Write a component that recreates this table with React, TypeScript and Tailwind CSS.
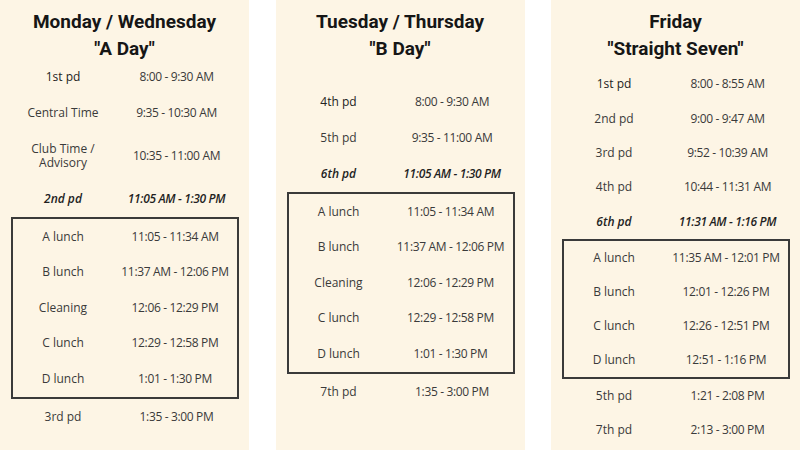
type Row = { label: string; time: string; lines?: number; strong?: boolean; italic?: boolean };

type Day = {
  title: string;
  sub: string;
  start: number;
  rowH: number;
  before: Row[];
  lunch: Row[];
  after: Row[];
};

const DAYS: Day[] = [
  {
    title: 'Monday / Wednesday',
    sub: '"A Day"',
    start: 59,
    rowH: 36,
    before: [
      { label: '1st pd', time: '8:00 - 9:30 AM', strong: true },
      { label: 'Central Time', time: '9:35 - 10:30 AM' },
      { label: 'Club Time / Advisory', time: '10:35 - 11:00 AM', lines: 2 },
      { label: '2nd pd', time: '11:05 AM - 1:30 PM', italic: true },
    ],
    lunch: [
      { label: 'A lunch', time: '11:05 - 11:34 AM' },
      { label: 'B lunch', time: '11:37 AM - 12:06 PM' },
      { label: 'Cleaning', time: '12:06 - 12:29 PM' },
      { label: 'C lunch', time: '12:29 - 12:58 PM' },
      { label: 'D lunch', time: '1:01 - 1:30 PM' },
    ],
    after: [{ label: '3rd pd', time: '1:35 - 3:00 PM' }],
  },
  {
    title: 'Tuesday / Thursday',
    sub: '"B Day"',
    start: 84,
    rowH: 36,
    before: [
      { label: '4th pd', time: '8:00 - 9:30 AM', strong: true },
      { label: '5th pd', time: '9:35 - 11:00 AM' },
      { label: '6th pd', time: '11:05 AM - 1:30 PM', italic: true },
    ],
    lunch: [
      { label: 'A lunch', time: '11:05 - 11:34 AM' },
      { label: 'B lunch', time: '11:37 AM - 12:06 PM' },
      { label: 'Cleaning', time: '12:06 - 12:29 PM' },
      { label: 'C lunch', time: '12:29 - 12:58 PM' },
      { label: 'D lunch', time: '1:01 - 1:30 PM' },
    ],
    after: [{ label: '7th pd', time: '1:35 - 3:00 PM' }],
  },
  {
    title: 'Friday',
    sub: '"Straight Seven"',
    start: 67,
    rowH: 34.4,
    before: [
      { label: '1st pd', time: '8:00 - 8:55 AM', strong: true },
      { label: '2nd pd', time: '9:00 - 9:47 AM' },
      { label: '3rd pd', time: '9:52 - 10:39 AM' },
      { label: '4th pd', time: '10:44 - 11:31 AM' },
      { label: '6th pd', time: '11:31 AM - 1:16 PM', italic: true },
    ],
    lunch: [
      { label: 'A lunch', time: '11:35 AM - 12:01 PM' },
      { label: 'B lunch', time: '12:01 - 12:26 PM' },
      { label: 'C lunch', time: '12:26 - 12:51 PM' },
      { label: 'D lunch', time: '12:51 - 1:16 PM' },
    ],
    after: [
      { label: '5th pd', time: '1:21 - 2:08 PM' },
      { label: '7th pd', time: '2:13 - 3:00 PM' },
    ],
  },
];

const ScheduleRow = ({ row, h, boxed }: { row: Row; h: number; boxed?: boolean }) => (
  <div
    className={
      (boxed ? 'grid-cols-[100px_1fr]' : 'grid-cols-[104px_1fr]') +
      ' grid items-center text-center leading-[14px] ' +
      (row.italic ? 'italic font-semibold text-[#1f1f1f]' : 'text-[#3a3a3a]')
    }
    style={{ height: h + (row.lines ? (row.lines - 1) * 14 : 0) }}
  >
    <span className={row.strong ? 'font-medium text-[#222] px-3' : 'px-3'}>{row.label}</span>
    <span className="whitespace-nowrap tracking-[-0.35px]">{row.time}</span>
  </div>
);

const DayPanel = ({ day }: { day: Day }) => (
  <section className="flex h-[450px] w-[249px] shrink-0 flex-col bg-[#fdf5e5] font-['Open_Sans',sans-serif] text-[12px]">
    <div className="pt-[8px] text-center font-['Roboto',sans-serif] text-[19px] font-bold leading-[27px] text-[#161616]">
      <div>{day.title}</div>
      <div>{day.sub}</div>
    </div>
    <div className="px-[11px]" style={{ marginTop: day.start - 62 }}>
      {day.before.map((r) => (
        <ScheduleRow key={r.label} row={r} h={day.rowH} />
      ))}
    </div>
    <div className="ml-[11px] mr-[10px] border-2 border-[#3a3a3a]">
      {day.lunch.map((r) => (
        <ScheduleRow key={r.label} row={r} h={day.rowH - 0.5} boxed />
      ))}
    </div>
    <div className="px-[11px]">
      {day.after.map((r) => (
        <ScheduleRow key={r.label} row={r} h={day.rowH} />
      ))}
    </div>
  </section>
);

export default function App() {
  return (
    <div className="flex h-[450px] w-[800px] justify-between overflow-hidden bg-white">
      {DAYS.map((d) => (
        <DayPanel key={d.title} day={d} />
      ))}
    </div>
  );
}
